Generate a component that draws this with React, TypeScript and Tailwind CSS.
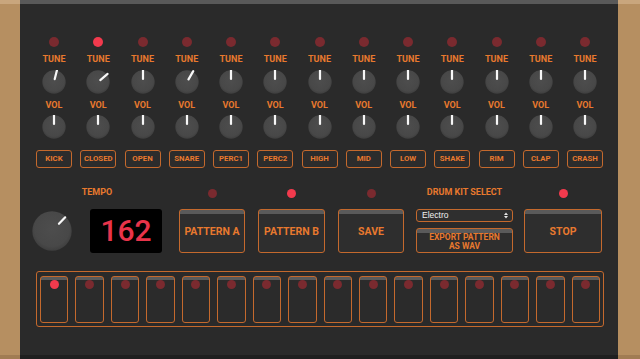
import React from "react";

const channels: { name: string; tune: number; lit?: boolean }[] = [
  { name: "KICK", tune: 14 },
  { name: "CLOSED", tune: 50, lit: true },
  { name: "OPEN", tune: 0 },
  { name: "SNARE", tune: 30 },
  { name: "PERC1", tune: 0 },
  { name: "PERC2", tune: 0 },
  { name: "HIGH", tune: 0 },
  { name: "MID", tune: 0 },
  { name: "LOW", tune: 0 },
  { name: "SHAKE", tune: 0 },
  { name: "RIM", tune: 0 },
  { name: "CLAP", tune: 0 },
  { name: "CRASH", tune: 0 },
];

function Knob({ size, angle, r1, r2 }: { size: number; angle: number; r1: number; r2: number }) {
  const c = size / 2;
  return (
    <svg width={size} height={size} viewBox={`0 0 ${size} ${size}`} className="block">
      <defs>
        <radialGradient id={`kg${size}`} cx="50%" cy="45%" r="55%">
          <stop offset="0%" stopColor="#4d4d4d" />
          <stop offset="80%" stopColor="#484848" />
          <stop offset="100%" stopColor="#3e3e3e" />
        </radialGradient>
      </defs>
      <circle cx={c} cy={c} r={c - 0.3} fill={`url(#kg${size})`} />
      <line
        x1={c}
        y1={c - r1}
        x2={c}
        y2={c - r2}
        stroke="#f7f7f7"
        strokeWidth={2.2}
        strokeLinecap="round"
        transform={`rotate(${angle} ${c} ${c})`}
      />
    </svg>
  );
}

function Led({ lit, size }: { lit?: boolean; size: number }) {
  return (
    <div
      className={`rounded-full ${lit ? "bg-[#f23a4d]" : "bg-[#7a2a2f]"}`}
      style={{ width: size, height: size }}
    />
  );
}

function BigButton({ label, w }: { label: string; w: number }) {
  return (
    <div
      className="h-[44px] rounded-[3px] border border-[#c4692d] bg-[linear-gradient(#5a5a5a_0,#5a5a5a_4px,#2e2e2e_4px)] flex items-center justify-center text-[10.5px] font-bold text-[#e8792e] pt-[2px]"
      style={{ width: w }}
    >
      {label}
    </div>
  );
}

export default function App() {
  return (
    <div className="w-[640px] h-[359px] flex flex-col overflow-hidden font-['Roboto',_'Liberation_Sans',_sans-serif]">
      <div className="h-[4px] flex">
        <div className="w-[20px] bg-[#c9a67d]" />
        <div className="w-[598px] bg-[#595959]" />
        <div className="flex-1 bg-[#c9a67d]" />
      </div>
      <div className="flex-1 flex">
        <div className="w-[20px] bg-[#b68f61]" />
        <div className="w-[598px] bg-[#2a2a2a] flex flex-col pt-[33px]">
          {/* channel strip */}
          <div className="flex justify-between pl-[16px] pr-[15px]">
            {channels.map((ch) => (
              <div key={ch.name} className="w-[36px] flex flex-col items-center">
                <Led lit={ch.lit} size={10} />
                <div className="mt-[7px] h-[10px] leading-[10px] text-[9px] font-bold text-[#e8792e]">TUNE</div>
                <div className="mt-[6px]">
                  <Knob size={24} angle={ch.tune} r1={3} r2={12.5} />
                </div>
                <div className="mt-[6px] h-[10px] leading-[10px] text-[9px] font-bold text-[#e8792e]">VOL</div>
                <div className="mt-[5px]">
                  <Knob size={24} angle={0} r1={3} r2={12.5} />
                </div>
                <div className="mt-[11px] w-[36px] h-[18px] rounded-[3px] border border-[#c4692d] bg-[#2c2c2c] flex items-center justify-center text-[7.8px] font-bold text-[#e8792e]">
                  {ch.name}
                </div>
              </div>
            ))}
          </div>

          {/* transport row */}
          <div className="mt-[19px] flex items-start pl-[12px]">
            <div className="w-[130px] flex flex-col items-center">
              <div className="h-[12px] flex items-center text-[9px] font-bold text-[#e8792e]">TEMPO</div>
              <div className="mt-[10px] h-[44px] flex items-center gap-[18px]">
                <Knob size={40} angle={44} r1={10} r2={19} />
                <div className="w-[72px] h-[44px] rounded-[3px] bg-black flex items-center justify-center text-[30px] leading-none font-medium text-[#e8344a]">
                  162
                </div>
              </div>
            </div>

            <div className="ml-[17px] flex flex-col items-center">
              <div className="h-[12px] flex items-center"><Led size={9} /></div>
              <div className="mt-[10px]"><BigButton label="PATTERN A" w={66} /></div>
            </div>
            <div className="ml-[13px] flex flex-col items-center">
              <div className="h-[12px] flex items-center"><Led lit size={9} /></div>
              <div className="mt-[10px]"><BigButton label="PATTERN B" w={67} /></div>
            </div>
            <div className="ml-[13px] flex flex-col items-center">
              <div className="h-[12px] flex items-center"><Led size={9} /></div>
              <div className="mt-[10px]"><BigButton label="SAVE" w={66} /></div>
            </div>

            <div className="ml-[12px] w-[97px] flex flex-col items-center">
              <div className="h-[12px] flex items-center text-[9px] font-bold text-[#e8792e] whitespace-nowrap">DRUM KIT SELECT</div>
              <div className="mt-[10px] w-full h-[44px] flex flex-col gap-[6px]">
                <div className="h-[13px] rounded-[3px] border border-[#c4692d] bg-[#2f2f2f] flex items-center justify-between pl-[5px] pr-[4px]">
                  <span className="text-[8.5px] leading-none text-[#f0f0f0] font-['Liberation_Sans',_sans-serif]">Electro</span>
                  <svg width="4" height="7" viewBox="0 0 4 7" className="block">
                    <path d="M0 3 L2 0.5 L4 3 Z" fill="#e8e8e8" />
                    <path d="M0 4 L2 6.5 L4 4 Z" fill="#e8e8e8" />
                  </svg>
                </div>
                <div className="h-[25px] rounded-[3px] border border-[#c4692d] bg-[linear-gradient(#5a5a5a_0,#5a5a5a_4px,#2e2e2e_4px)] flex flex-col items-center justify-center pt-[2px] text-[8.5px] leading-[9px] font-bold text-[#e8792e] text-center">
                  <span>EXPORT PATTERN</span>
                  <span>AS WAV</span>
                </div>
              </div>
            </div>

            <div className="ml-[11px] flex flex-col items-center">
              <div className="h-[12px] flex items-center"><Led lit size={9} /></div>
              <div className="mt-[10px]"><BigButton label="STOP" w={78} /></div>
            </div>
          </div>

          {/* step sequencer */}
          <div className="mt-[18px] ml-[16px] w-[568px] h-[56px] rounded-[3px] border border-[#c4692d] flex gap-[7px] pl-[3px] pr-[3px] pt-[4px] pb-[3px]">
            {Array.from({ length: 16 }).map((_, i) => (
              <div
                key={i}
                className="flex-1 rounded-[3px] border border-[#c4692d] bg-[linear-gradient(#5a5a5a_0,#5a5a5a_3px,#2b2b2b_3px)] flex flex-col items-center"
              >
                <div className="mt-[3px]"><Led lit={i === 0} size={9} /></div>
              </div>
            ))}
          </div>
        </div>
        <div className="flex-1 bg-[#b68f61]" />
      </div>
      <div className="h-[4px] flex">
        <div className="w-[20px] bg-[#a17c53]" />
        <div className="w-[598px] bg-[#1f1f1f]" />
        <div className="flex-1 bg-[#a17c53]" />
      </div>
    </div>
  );
}
